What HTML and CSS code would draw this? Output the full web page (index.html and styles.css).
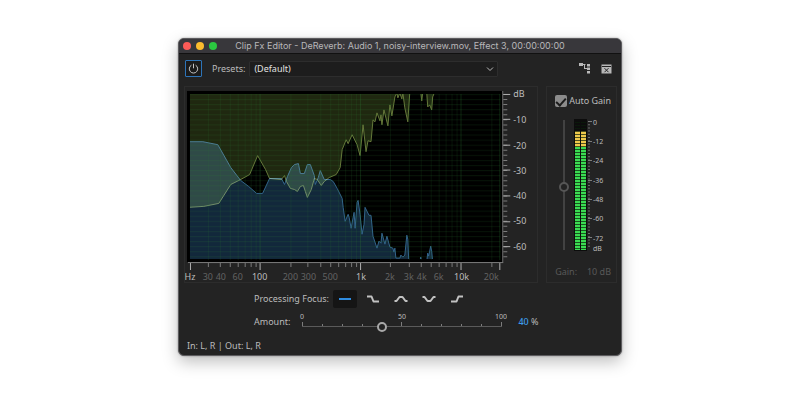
FILE: index.html
```html
<!DOCTYPE html>
<html lang="en">
<head>
    <meta charset="UTF-8">
    <meta name="viewport" content="width=device-width, initial-scale=1.0">
    <title>Clip Fx Editor - DeReverb</title>
    <link rel="stylesheet" href="styles.css">
</head>
<body>
    <div class="window">
        <div class="titlebar">
            <div class="lights">
                <span class="light close"></span>
                <span class="light minimize"></span>
                <span class="light expand"></span>
            </div>
            <h1>Clip Fx Editor - DeReverb: Audio 1, noisy-interview.mov, Effect 3, 00:00:00:00</h1>
        </div>

        <div class="toolbar">
            <button class="power" aria-label="Power">
                <svg width="11" height="11" viewBox="0 0 11 11"><path d="M3.4 2.2a4.2 4.2 0 1 0 4.2 0M5.500 .7v4.600"/></svg>
            </button>
            <label class="preset-label" for="preset">Presets:</label>
            <div class="select-box">
                <select id="preset">
                    <option>(Default)</option>
                </select>
                <svg class="chevron" width="8" height="6" viewBox="0 0 8 6"><path d="M1 1.5l3 3 3-3"/></svg>
            </div>
            <div class="tools">
                <button aria-label="Channel routing">
                    <svg width="12" height="11" viewBox="0 0 12 11">
                        <path class="fill" d="M0 0h4v3h-4zM8 1h3v2.500h-3zM8 4.500h3v2.500h-3zM8 8h3v2.500h-3z"/>
                        <path class="line" d="M4 1.500h2.500M5.500 1.500v4.500M5.500 5.500h2.500"/>
                    </svg>
                </button>
                <button aria-label="Close editor">
                    <svg width="11" height="10" viewBox="0 0 11 10">
                        <path class="fill" d="M.5 .5h10v9h-10z"/>
                        <path class="dark" d="M1 2.500h9M3.500 4.200l4 4M7.500 4.200l-4 4"/>
                    </svg>
                </button>
            </div>
        </div>

        <div class="main">
            <div class="panel graph">
                <svg viewBox="185 87 354 196" role="img" aria-label="Frequency response">
                    <defs>
                        <pattern id="rows" x="190" y="94" width="20" height="5.1" patternUnits="userSpaceOnUse">
                            <path d="M0 .5h20"/>
                        </pattern>
                        <clipPath id="area">
                            <rect x="190" y="94" width="312" height="166"/>
                        </clipPath>
                    </defs>
                    <rect class="plot" x="187" y="91" width="318" height="172"/>
                    <g clip-path="url(#area)">
                        <!-- reverb -->
                        <path class="reverb" d="M188 92V208L204 207L219 204L231 185L241 180L250 175L258 156L266 170L270 179L282 180L285 176L287 182L291 189L295 190L298 192L301 187L304 186L306 192L308 198L312 190L315 179L318 180L322 186L325 182L330 178L337 175L341 168L343 150L347 140L349 144L353 135L358 145L361 156L364 125L367 152L369 141L372 142L374 120L376 122L378 113L381 121L382 115L383 125L385 110L389 126L391 105L393 116L396 97L398 93L399 98L401 93L403 99L404 93L406 108L409 122L411 92H422L423 101L424 92H428L429 107L431 105L433 110L434 97L436 92Z"/>
                        <!-- clean signal -->
                        <path class="signal" d="M188 263V142H203L218 145L231 168L241 181L249 187L257 194H263L270 179H282L285 185L288 177L292 168L295 165L299 164L301 174H305L308 165H311L315 176L316 185L319 178L321 171L325 180H331L334 182L338 189L343 199L344 208L346 222L349 215L350 218L352 229L355 213L356 229L358 203L359 201L361 215L363 235L365 225L366 208L370 216H372L374 237L378 249L380 242L382 244L383 234L386 245L388 237L391 248L394 249L395 253L396 249L397 259H401L402 256L404 258L406 256L408 236L409 240L410 263H421L422 258L423 263H428L429 254L430 257L432 247L433 252L434 263Z"/>
                    </g>
                    <path class="grid" d="M208.500 94V261M220.500 94V261M230.500 94V261M238.500 94V261M245.500 94V261M251.500 94V261M256.500 94V261M291.500 94V261M308.500 94V261M321.500 94V261M331.500 94V261M339.500 94V261M346.500 94V261M352.500 94V261M357.500 94V261M391.500 94V261M410.500 94V261M422.500 94V261M432.500 94V261M440.500 94V261M447.500 94V261M453.500 94V261M458.500 94V261M493.500 94V261"/>
                    <path class="grid strong" d="M260.500 94V261M361.500 94V261M462.500 94V261M501.500 94V261"/>
                    <rect class="rows" x="190" y="94" width="312" height="167"/>
                    <!-- axes -->
                    <path class="axis" d="M504.500 91V263M188 263.500H505"/>
                    <path class="axis" stroke-dasharray="1 4.1" stroke-width="4" d="M507 94V262"/>
                    <path class="tick" d="M505 94.500h7M505 119.500h7M505 145.500h7M505 170.500h7M505 196.500h7M505 222.500h7M505 247.500h7M190.500 264v7M260.500 264v7M361.500 264v7M462.500 264v7M501.500 264v7"/>
                    <path class="axis" d="M208.500 264v4M220.500 264v4M230.500 264v4M238.500 264v4M245.500 264v4M251.500 264v4M256.500 264v4M291.500 264v4M308.500 264v4M321.500 264v4M331.500 264v4M339.500 264v4M346.500 264v4M352.500 264v4M357.500 264v4M391.500 264v4M410.500 264v4M422.500 264v4M432.500 264v4M440.500 264v4M447.500 264v4M453.500 264v4M458.500 264v4M493.500 264v4"/>
                    <g class="scale">
                        <text x="515" y="97">dB</text>
                        <text x="515" y="123">-10</text>
                        <text x="515" y="149">-20</text>
                        <text x="515" y="174">-30</text>
                        <text x="515" y="200">-40</text>
                        <text x="515" y="225">-50</text>
                        <text x="515" y="251">-60</text>
                    </g>
                    <g class="scale middle">
                        <text x="190" y="281">Hz</text>
                        <text x="260" y="281">100</text>
                        <text x="362" y="281">1k</text>
                        <text x="463" y="281">10k</text>
                    </g>
                    <g class="scale middle dim">
                        <text x="208" y="281">30</text>
                        <text x="221" y="281">40</text>
                        <text x="238" y="281">60</text>
                        <text x="291" y="281">200</text>
                        <text x="309" y="281">300</text>
                        <text x="331" y="281">500</text>
                        <text x="391" y="281">2k</text>
                        <text x="410" y="281">3k</text>
                        <text x="423" y="281">4k</text>
                        <text x="440" y="281">6k</text>
                        <text x="493" y="281">20k</text>
                    </g>
                </svg>
            </div>

            <div class="panel gain">
                <label class="auto">
                    <input type="checkbox" checked>
                    Auto Gain
                </label>
                <div class="levels">
                    <input class="gain-slider" type="range" min="0" max="100" value="48" aria-label="Gain" disabled>
                    <div class="meter">
                        <div class="bar"></div>
                        <div class="bar"></div>
                    </div>
                    <svg class="meter-scale" width="18" height="136" viewBox="0 0 18 136">
                        <path class="dots" d="M1 4V132"/>
                        <path class="axis" d="M0 4.500h4M0 24.500h4M0 43.500h4M0 63.500h4M0 82.500h4M0 101.500h4M0 120.500h4"/>
                        <g class="scale small">
                            <text x="5" y="8">0</text>
                            <text x="5" y="27">-12</text>
                            <text x="5" y="46">-24</text>
                            <text x="5" y="66">-36</text>
                            <text x="5" y="85">-48</text>
                            <text x="5" y="104">-60</text>
                            <text x="5" y="124">-72</text>
                            <text x="5" y="134">dB</text>
                        </g>
                    </svg>
                </div>
                <div class="gain-value">
                    <span>Gain:</span>
                    <span>10 dB</span>
                </div>
            </div>
        </div>

        <div class="controls">
            <div class="row focus">
                <span>Processing Focus:</span>
                <div class="shapes">
                    <button class="active" aria-label="All frequencies"><svg width="14" height="10" viewBox="0 0 14 10"><path d="M1 5h12"/></svg></button>
                    <button aria-label="Low frequencies"><svg width="14" height="10" viewBox="0 0 14 10"><path d="M1 2.500h4.500l2 5h5.500"/></svg></button>
                    <button aria-label="Mid frequencies"><svg width="14" height="10" viewBox="0 0 14 10"><path d="M.5 7h2l3-4h3l3 4h2"/></svg></button>
                    <button aria-label="Low and high frequencies"><svg width="14" height="10" viewBox="0 0 14 10"><path d="M.5 3h2l3 4h3l3-4h2"/></svg></button>
                    <button aria-label="High frequencies"><svg width="14" height="10" viewBox="0 0 14 10"><path d="M1 7.500h5.500l2-5h4.500"/></svg></button>
                </div>
            </div>
            <div class="row amount">
                <label for="amount">Amount:</label>
                <div class="amount-slider">
                    <svg width="210" height="14" viewBox="0 0 210 14">
                        <g class="scale middle small">
                            <text x="5" y="7">0</text>
                            <text x="105" y="7">50</text>
                            <text x="204" y="7">100</text>
                        </g>
                        <path class="axis" d="M5.500 10v4M104.500 10v4M204.500 10v4M25.500 12v2M45.500 12v2M65.500 12v2M85.500 12v2M124.500 12v2M144.500 12v2M164.500 12v2M184.500 12v2"/>
                    </svg>
                    <input id="amount" type="range" min="0" max="100" value="40">
                </div>
                <span class="amount-value"><b>40</b> %</span>
            </div>
        </div>

        <div class="status">In: L, R | Out: L, R</div>
    </div>
</body>
</html>
```

FILE: styles.css
```css
* {
    box-sizing: border-box;
}
body {
    margin: 0;
    padding: 38px 16px;
    background-color: #fff;
    color: #bcbcbc;
    font-family: "Noto Sans", sans-serif;
    font-size: 9px;
    line-height: 12px;
}
button, select, input {
    margin: 0;
    padding: 0;
    font: inherit;
    color: inherit;
}
button {
    display: flex;
    align-items: center;
    justify-content: center;
    border: none;
    background: none;
}
svg {
    display: block;
    fill: none;
}
.window {
    max-width: 444px;
    margin: 0 auto;
    border: 1px solid #5c5b5e;
    border-radius: 6px;
    background-color: #232323;
    box-shadow: 0 0 2px rgba(0, 0, 0, 0.4), 0 6px 16px rgba(0, 0, 0, 0.25);
    overflow: hidden;
}
.titlebar {
    display: flex;
    align-items: center;
    height: 15px;
    padding: 0 4px;
    background-color: #38373b;
    border-bottom: 1px solid #111;
}
.titlebar h1 {
    flex: 1;
    margin: 0;
    padding-right: 34px;
    color: #b9b8ba;
    font-family: Inter, sans-serif;
    font-size: 9px;
    font-weight: 400;
    text-align: center;
    white-space: nowrap;
}
.lights {
    display: flex;
    gap: 5px;
}
.light {
    width: 8px;
    height: 8px;
    border-radius: 50%;
}
.close {
    background-color: #fc5b57;
}
.minimize {
    background-color: #fdbc2e;
}
.expand {
    background-color: #2bc840;
}

/* toolbar */
.toolbar {
    display: flex;
    align-items: center;
    height: 29px;
    padding: 0 9px 0 6px;
}
.power {
    width: 17px;
    height: 17px;
    border: 1px solid #2d74b8;
    border-radius: 1px;
    background-color: #1b1b1b;
}
.power svg {
    stroke: #c4c4c4;
}
.preset-label {
    margin: 0 4px 0 10px;
}
.select-box {
    position: relative;
    flex: 1;
    max-width: 249px;
}
.select-box select {
    display: block;
    width: 100%;
    height: 16px;
    padding: 0 4px;
    border: 1px solid #2d2d2d;
    border-radius: 1px;
    background-color: #1d1d1d;
    color: #e2e2e2;
    appearance: none;
}
.chevron {
    position: absolute;
    top: 5px;
    right: 4px;
    stroke: #bbb;
    pointer-events: none;
}
.tools {
    display: flex;
    gap: 10px;
    margin-left: auto;
}
.fill {
    fill: #b8b8b8;
}
.line {
    stroke: #b8b8b8;
}
.dark {
    stroke: #232323;
}

/* graph and gain */
.main {
    display: flex;
    gap: 8px;
    padding: 3px 4px 0 5px;
}
.panel {
    border: 1px solid #2c2c2c;
}
.graph {
    flex: 1;
}
.plot {
    fill: #000;
}
.reverb {
    fill: #1f2810;
    stroke: #67793a;
}
.signal {
    fill: #12283b;
    stroke: #32658c;
    mix-blend-mode: screen;
}
.grid, #rows path {
    stroke: #2d7a32;
    stroke-opacity: 0.16;
}
.grid.strong {
    stroke-opacity: 0.3;
}
.rows {
    fill: url(#rows);
}
.axis {
    stroke: #7c7c7c;
}
.tick {
    stroke: #b0b0b0;
}
.scale {
    fill: #bcbcbc;
    font-size: 9px;
}
.middle {
    text-anchor: middle;
}
.dim {
    fill: #626262;
}
.small {
    font-size: 7px;
}
.gain {
    flex: 0 0 69px;
    display: flex;
    flex-direction: column;
    padding: 8px 5px 4px 8px;
}
.auto {
    display: flex;
    align-items: center;
    gap: 2px;
    white-space: nowrap;
}
.auto input {
    display: grid;
    place-items: center;
    width: 12px;
    height: 12px;
    border-radius: 2px;
    background-color: #8c8c8c;
    appearance: none;
}
.auto input:checked::before {
    content: "";
    width: 4px;
    height: 8px;
    border: solid #1c1c1c;
    border-width: 0 2px 2px 0;
    transform: rotate(42deg);
}
.levels {
    display: flex;
    align-items: center;
    padding-top: 10px;
}
input[type="range"] {
    appearance: none;
    background: none;
}
input[type="range"]::-webkit-slider-thumb {
    appearance: none;
    width: 10px;
    height: 10px;
    border: 2px solid #a8a8a8;
    border-radius: 50%;
    background-color: #232323;
}
.gain-slider {
    width: 10px;
    height: 130px;
    margin: 0 5px 0 4px;
    writing-mode: vertical-lr;
    direction: rtl;
}
.gain-slider::-webkit-slider-runnable-track {
    width: 10px;
    height: 100%;
    background: linear-gradient(#424242, #424242) center / 2px 100% no-repeat;
}
input.gain-slider::-webkit-slider-thumb {
    border-color: #555;
}
.meter {
    display: flex;
    gap: 1px;
    height: 132px;
    padding: 1px;
    background-color: #0c0c0c;
}
.bar {
    width: 5px;
    background:
        repeating-linear-gradient(transparent 0 2px, rgba(10, 30, 10, 0.7) 2px 3px),
        linear-gradient(#0c0c0c 11px, #efc94c 11px 27px, #3adb52 27px);
}
.meter-scale {
    flex: none;
    margin-left: 1px;
}
.dots {
    stroke: #6c6c6c;
    stroke-width: 2;
    stroke-dasharray: 1 2.2;
}
.gain-value {
    display: flex;
    justify-content: space-between;
    margin-top: auto;
    color: #595959;
}

/* controls */
.controls {
    padding: 7px 0 0 75px;
}
.row {
    display: flex;
    align-items: center;
    white-space: nowrap;
}
.focus {
    gap: 4px;
}
.shapes {
    display: flex;
    gap: 4px;
}
.shapes button {
    width: 24px;
    height: 18px;
    border-radius: 2px;
}
.shapes svg {
    stroke: #c2c2c2;
    stroke-width: 2;
    stroke-linejoin: round;
}
.shapes .active {
    background-color: #151515;
}
.shapes .active svg {
    stroke: #2f8ce0;
}
.amount {
    gap: 7px;
    padding-top: 4px;
}
.amount-slider {
    width: 210px;
}
.amount-slider input {
    display: block;
    width: 100%;
    height: 10px;
    margin-top: -4px;
}
.amount-slider input::-webkit-slider-runnable-track {
    height: 10px;
    background: linear-gradient(#5a5a5a, #5a5a5a) center / 200px 1px no-repeat;
}
.amount-value {
    margin-left: 4px;
}
.amount-value b {
    color: #3d9be9;
    font-weight: 500;
}
.status {
    padding: 8px 8px 3px;
}
```
